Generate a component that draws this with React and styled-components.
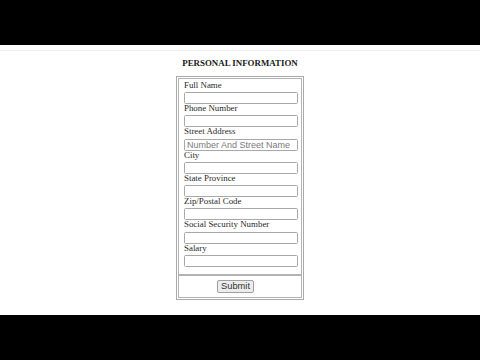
import styled, { createGlobalStyle } from 'styled-components';

const fields = [
  { label: 'Full Name' },
  { label: 'Phone Number' },
  { label: 'Street Address', placeholder: 'Number And Street Name' },
  { label: 'City' },
  { label: 'State Province' },
  { label: 'Zip/Postal Code' },
  { label: 'Social Security Number' },
  { label: 'Salary' },
];

export default function App() {
  return (
    <>
      <GlobalStyle />
      <Frame>
        <Letterbox />
        <Screen>
          <Rule />
          <Title>PERSONAL INFORMATION</Title>
          <FormBox>
            <FieldsCell>
              {fields.map((f) => (
                <Field key={f.label}>
                  <Label>{f.label}</Label>
                  <Input type="text" placeholder={f.placeholder} />
                </Field>
              ))}
            </FieldsCell>
            <SubmitCell>
              <SubmitButton type="button">Submit</SubmitButton>
            </SubmitCell>
          </FormBox>
        </Screen>
        <Letterbox />
      </Frame>
    </>
  );
}

const GlobalStyle = createGlobalStyle`
  html, body {
    margin: 0;
    padding: 0;
    background: #000;
  }
`;

const Frame = styled.div`
  width: 480px;
  height: 360px;
  display: flex;
  flex-direction: column;
  background: #000;
  overflow: hidden;
`;

const Letterbox = styled.div`
  height: 45px;
  flex: none;
  background: #000;
`;

const Screen = styled.div`
  height: 270px;
  flex: none;
  background: #fff;
  display: flex;
  flex-direction: column;
`;

const Rule = styled.div`
  height: 5px;
  border-bottom: 1px solid #efefef;
`;

const Title = styled.h1`
  margin: 7px 0;
  font-family: 'Liberation Serif', 'Times New Roman', serif;
  font-size: 8.9px;
  line-height: 11px;
  font-weight: bold;
  text-align: center;
  color: #1a1a1a;
`;

const FormBox = styled.div`
  width: 128px;
  margin: 0 auto;
  box-sizing: border-box;
  border: 1px solid #a9a9a9;
  padding: 1px;
`;

const FieldsCell = styled.div`
  border: 1px solid #b3b3b3;
  padding: 1.7px 3px 6.9px 5px;
`;

const Field = styled.div`
  display: flex;
  flex-direction: column;
`;

const Label = styled.label`
  display: block;
  font-family: 'Liberation Serif', 'Times New Roman', serif;
  font-size: 8.9px;
  line-height: 8.6px;
  color: #2a2a2a;
  white-space: nowrap;
`;

const Input = styled.input`
  display: block;
  box-sizing: border-box;
  width: 114px;
  height: 12px;
  margin: 2.7px 0 0;
  padding: 0 2px;
  border: 1px solid #a8a8a8;
  border-radius: 1.5px;
  background: #fff;
  font-family: 'Liberation Sans', Arial, sans-serif;
  font-size: 9px;
  outline: none;

  &::placeholder {
    color: #7a7a7a;
  }
`;

const SubmitCell = styled.div`
  box-sizing: border-box;
  height: 23px;
  border: 1px solid #b3b3b3;
  padding: 4px 9px 0 0;
  text-align: center;
`;

const SubmitButton = styled.button`
  width: 37px;
  height: 13px;
  padding: 0;
  border: 1px solid #a0a0a0;
  border-radius: 2px;
  background: #ececec;
  font-family: 'Liberation Sans', Arial, sans-serif;
  font-size: 9.3px;
  line-height: 11px;
  color: #333;
  vertical-align: top;
`;
